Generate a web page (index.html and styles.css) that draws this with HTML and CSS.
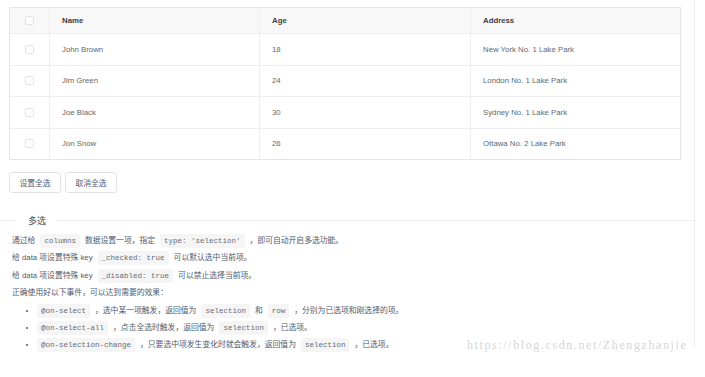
FILE: index.html
```html
<!DOCTYPE html>
<html lang="zh-CN">
<head>
<meta charset="utf-8">
<title>多选</title>
<link rel="stylesheet" href="styles.css">
</head>
<body>
<div class="demo">
  <div class="demo-body">
    <div class="table">
      <div class="row head">
        <div class="cell check"><span class="box"></span></div>
        <div class="cell">Name</div>
        <div class="cell">Age</div>
        <div class="cell last">Address</div>
      </div>
      <div class="row">
        <div class="cell check"><span class="box"></span></div>
        <div class="cell">John Brown</div>
        <div class="cell">18</div>
        <div class="cell last">New York No. 1 Lake Park</div>
      </div>
      <div class="row">
        <div class="cell check"><span class="box"></span></div>
        <div class="cell">Jim Green</div>
        <div class="cell">24</div>
        <div class="cell last">London No. 1 Lake Park</div>
      </div>
      <div class="row">
        <div class="cell check"><span class="box"></span></div>
        <div class="cell">Joe Black</div>
        <div class="cell">30</div>
        <div class="cell last">Sydney No. 1 Lake Park</div>
      </div>
      <div class="row end">
        <div class="cell check"><span class="box"></span></div>
        <div class="cell">Jon Snow</div>
        <div class="cell">26</div>
        <div class="cell last">Ottawa No. 2 Lake Park</div>
      </div>
    </div>
    <div class="buttons">
      <button class="btn">设置全选</button>
      <button class="btn">取消全选</button>
    </div>
  </div>
  <div class="divider">
    <span class="line short"></span>
    <span class="legend">多选</span>
    <span class="line long"></span>
  </div>
  <div class="desc">
    <p>通过给<code>columns</code>数据设置一项，指定<code>type: 'selection'</code>，即可自动开启多选功能。</p>
    <p>给 data 项设置特殊 key<code>_checked: true</code>可以默认选中当前项。</p>
    <p>给 data 项设置特殊 key<code>_disabled: true</code>可以禁止选择当前项。</p>
    <p>正确使用好以下事件，可以达到需要的效果：</p>
    <ul>
      <li><code>@on-select</code>，选中某一项触发，返回值为<code>selection</code>和<code>row</code>，分别为已选项和刚选择的项。</li>
      <li><code>@on-select-all</code>，点击全选时触发，返回值为<code>selection</code>，已选项。</li>
      <li><code>@on-selection-change</code>，只要选中项发生变化时就会触发，返回值为<code>selection</code>，已选项。</li>
    </ul>
  </div>
  <div class="watermark">https://blog.csdn.net/Zhengzhanjie</div>
</div>
</body>
</html>
```
FILE: styles.css
```css
html, body {
  margin: 0;
  padding: 0;
  background: #fff;
}
body {
  min-height: 377px;
  font-family: "Liberation Sans", "Noto Sans CJK SC", sans-serif;
  color: #515a6e;
}
.demo {
  position: relative;
  width: 694px;
  height: 348px;
  border-right: 1px solid #eceef1;
}
.demo-body {
  padding: 7px 0 0 9px;
}
.table {
  width: 672px;
  border: 1px solid #e3e5e8;
  box-sizing: border-box;
  font-size: 7.8px;
}
.row {
  display: grid;
  grid-template-columns: 40px 210px 211px 1fr;
  height: 31.5px;
  border-bottom: 1px solid #eceef1;
  box-sizing: border-box;
}
.row.end { border-bottom: 0; height: 30.5px; }
.row.head {
  height: 26px;
  background: #f8f8f9;
  font-weight: bold;
}
.cell {
  display: flex;
  align-items: center;
  padding-left: 12px;
  border-right: 1px solid #eceef1;
  color: #62676f;
}
.head .cell { color: #3a4048; }
.cell.last { border-right: 0; }
.cell.check {
  justify-content: center;
  padding-left: 0;
}
.box {
  width: 9px;
  height: 9px;
  border: 1px solid #e1e3e7;
  border-radius: 2px;
  box-sizing: border-box;
  background: #fff;
}
.buttons {
  display: flex;
  gap: 4px;
  margin-top: 12px;
}
.btn {
  width: 52px;
  height: 21px;
  padding: 0;
  border: 1px solid #e1e3e7;
  border-radius: 3px;
  background: #fff;
  font-family: "Liberation Sans", "Noto Sans CJK SC", sans-serif;
  font-size: 7.8px;
  color: #515a6e;
}
.divider {
  display: flex;
  align-items: center;
  height: 12px;
  margin-top: 21px;
}
.line {
  height: 1px;
  background: #eceef1;
}
.line.short { width: 15px; }
.line.long { flex: 1; }
.legend {
  padding: 0 11px 0 13px;
  font-size: 9px;
  color: #464c5b;
}
.desc {
  padding: 6px 0 0 12px;
  font-size: 7.8px;
  color: #515a6e;
}
.desc p {
  margin: 0;
  height: 17.4px;
  line-height: 17.4px;
}
.desc ul {
  margin: 0;
  padding-left: 25px;
}
.desc li {
  height: 17.4px;
  line-height: 17.4px;
}
code {
  font-family: "Liberation Mono", "DejaVu Sans Mono", monospace;
  font-size: 7.5px;
  line-height: 1;
  background: #f5f5f6;
  color: #666c78;
  padding: 3px 4px;
  margin: 0 5px;
  border-radius: 2px;
}
.desc li > code:first-child {
  margin-left: 0;
}
.watermark {
  position: absolute;
  left: 467px;
  top: 338px;
  font-family: "Liberation Serif", serif;
  font-size: 12px;
  letter-spacing: 1.6px;
  color: #d6d6d6;
  white-space: nowrap;
}
```
